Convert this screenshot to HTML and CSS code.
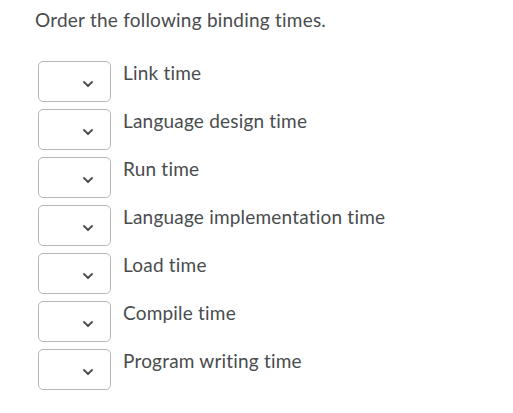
FILE: index.html
```html
<!DOCTYPE html>
<html>
<head>
<meta charset="utf-8">
<link rel="stylesheet" href="styles.css">
</head>
<body>
<div class="question">
  <p class="prompt">Order the following binding times.</p>
  <ul class="items">
    <li class="item"><span class="select"><svg class="chev" width="10" height="6" viewBox="0 0 10 6"><path d="M1 1 L5 5 L9 1" fill="none" stroke="#494c4e" stroke-width="1.8" stroke-linecap="round" stroke-linejoin="round"/></svg></span><span class="label">Link time</span></li>
    <li class="item"><span class="select"><svg class="chev" width="10" height="6" viewBox="0 0 10 6"><path d="M1 1 L5 5 L9 1" fill="none" stroke="#494c4e" stroke-width="1.8" stroke-linecap="round" stroke-linejoin="round"/></svg></span><span class="label">Language design time</span></li>
    <li class="item"><span class="select"><svg class="chev" width="10" height="6" viewBox="0 0 10 6"><path d="M1 1 L5 5 L9 1" fill="none" stroke="#494c4e" stroke-width="1.8" stroke-linecap="round" stroke-linejoin="round"/></svg></span><span class="label">Run time</span></li>
    <li class="item"><span class="select"><svg class="chev" width="10" height="6" viewBox="0 0 10 6"><path d="M1 1 L5 5 L9 1" fill="none" stroke="#494c4e" stroke-width="1.8" stroke-linecap="round" stroke-linejoin="round"/></svg></span><span class="label">Language implementation time</span></li>
    <li class="item"><span class="select"><svg class="chev" width="10" height="6" viewBox="0 0 10 6"><path d="M1 1 L5 5 L9 1" fill="none" stroke="#494c4e" stroke-width="1.8" stroke-linecap="round" stroke-linejoin="round"/></svg></span><span class="label">Load time</span></li>
    <li class="item"><span class="select"><svg class="chev" width="10" height="6" viewBox="0 0 10 6"><path d="M1 1 L5 5 L9 1" fill="none" stroke="#494c4e" stroke-width="1.8" stroke-linecap="round" stroke-linejoin="round"/></svg></span><span class="label">Compile time</span></li>
    <li class="item"><span class="select"><svg class="chev" width="10" height="6" viewBox="0 0 10 6"><path d="M1 1 L5 5 L9 1" fill="none" stroke="#494c4e" stroke-width="1.8" stroke-linecap="round" stroke-linejoin="round"/></svg></span><span class="label">Program writing time</span></li>
  </ul>
</div>
</body>
</html>
```
FILE: styles.css
```css
html, body {
  margin: 0;
  padding: 0;
  background: #ffffff;
}
body {
  font-family: Lato, "Open Sans", sans-serif;
  color: #494c4e;
  font-variant-ligatures: none;
}
.question {
  padding: 8px 0 0 35px;
}
.prompt {
  margin: 0;
  font-size: 19px;
  line-height: 24px;
  letter-spacing: 0.22px;
}
.items {
  list-style: none;
  margin: 29px 0 0 3px;
  padding: 0;
  display: flex;
  flex-direction: column;
  gap: 7px;
}
.item {
  display: flex;
  align-items: flex-start;
  gap: 12px;
}
.select {
  box-sizing: border-box;
  width: 73px;
  height: 41px;
  border: 1px solid #b5b8ba;
  border-radius: 5px;
  display: flex;
  align-items: center;
  justify-content: flex-end;
  padding-right: 17px;
  padding-top: 4px;
  flex-shrink: 0;
}
.chev {
  display: block;
}
.label {
  font-size: 19px;
  line-height: 24px;
  letter-spacing: 0.2px;
  margin-top: 0;
}
```
